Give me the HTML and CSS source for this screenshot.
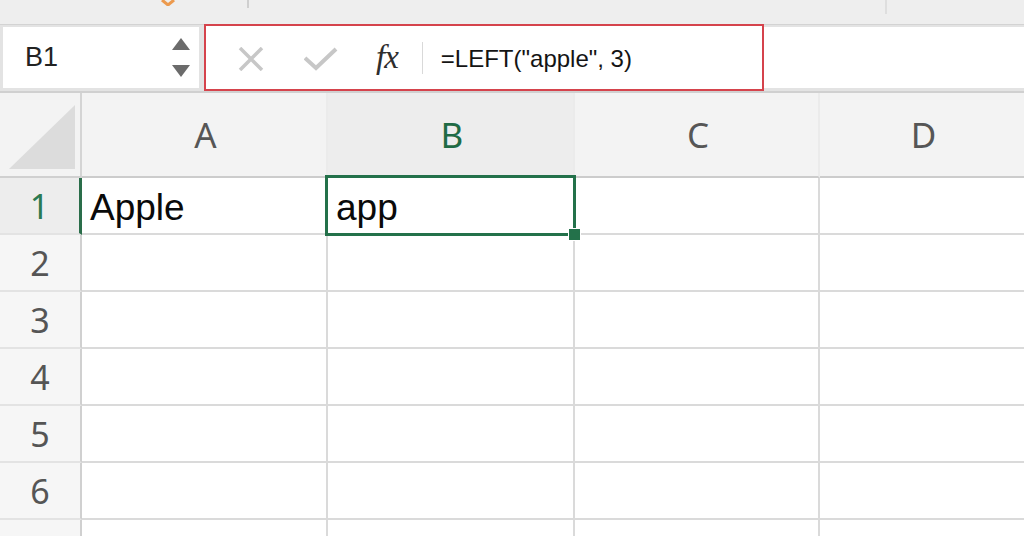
FILE: index.html
```html
<!DOCTYPE html>
<html>
<head>
<meta charset="utf-8">
<link rel="stylesheet" href="styles.css">
</head>
<body>
<div class="app">
  <div class="topstrip">
    <svg class="orange" width="14" height="6" viewBox="0 0 14 6"><path d="M1 0 L7 5 L13 0" fill="none" stroke="#ec9a4e" stroke-width="3"/></svg>
    <span class="tick tick1"></span>
    <span class="tick tick2"></span>
  </div>
  <div class="fbar">
    <div class="namebox">
      <span class="nb-text">B1</span>
      <div class="spinner">
        <svg width="18" height="13" viewBox="0 0 18 13"><path d="M9 0 L18 12 L0 12 Z" fill="#6b6b6b"/></svg>
        <svg width="18" height="13" viewBox="0 0 18 13"><path d="M0 1 L18 1 L9 13 Z" fill="#6b6b6b"/></svg>
      </div>
    </div>
    <div class="formula-box">
      <svg class="ic-x" width="26" height="24" viewBox="0 0 26 24"><path d="M2 1 L24 23 M24 1 L2 23" stroke="#c7c7c7" stroke-width="3.5" fill="none"/></svg>
      <svg class="ic-check" width="34" height="24" viewBox="0 0 34 24"><path d="M1 11 L12 21 L32 2" stroke="#c7c7c7" stroke-width="4" fill="none"/></svg>
      <span class="fx">fx</span>
      <span class="sep"></span>
      <span class="formula">=LEFT("apple", 3)</span>
    </div>
    <div class="fbar-rest"></div>
  </div>
  <div class="sheet">
    <div class="corner"><svg width="66" height="64" viewBox="0 0 66 64"><path d="M0 64 L66 64 L66 0 Z" fill="#dcdcdc"/></svg></div>
    <div class="colh">A</div>
    <div class="colh sel">B</div>
    <div class="colh">C</div>
    <div class="colh last">D</div>

    <div class="rowh sel">1</div>
    <div class="cell">Apple</div>
    <div class="cell active">app<span class="selbox"><span class="handle"></span></span></div>
    <div class="cell"></div>
    <div class="cell last"></div>

    <div class="rowh">2</div><div class="cell"></div><div class="cell"></div><div class="cell"></div><div class="cell last"></div>
    <div class="rowh">3</div><div class="cell"></div><div class="cell"></div><div class="cell"></div><div class="cell last"></div>
    <div class="rowh">4</div><div class="cell"></div><div class="cell"></div><div class="cell"></div><div class="cell last"></div>
    <div class="rowh">5</div><div class="cell"></div><div class="cell"></div><div class="cell"></div><div class="cell last"></div>
    <div class="rowh">6</div><div class="cell"></div><div class="cell"></div><div class="cell"></div><div class="cell last"></div>
    <div class="rowh">7</div><div class="cell"></div><div class="cell"></div><div class="cell"></div><div class="cell last"></div>
  </div>
</div>
</body>
</html>
```

FILE: styles.css
```css
* { box-sizing: border-box; }
html, body { margin: 0; padding: 0; background: #ffffff; }
body { width: 1024px; height: 536px; overflow: hidden; font-family: "Liberation Sans", Arial, sans-serif; }

.app { width: 1024px; height: 536px; overflow: hidden; display: flex; flex-direction: column; }

.topstrip {
  height: 25px;
  flex: none;
  background: #eeeeee;
  border-bottom: 1px solid #d3d3d3;
  display: flex;
  align-items: flex-start;
}
.orange { margin-left: 161px; display: block; }
.tick { display: block; width: 2px; background: #cfcfcf; }
.tick1 { height: 8px; margin-left: 72px; }
.tick2 { height: 14px; margin-left: 636px; background: #dedede; }

.fbar {
  height: 68px;
  flex: none;
  display: flex;
  background: #e3e3e3;
  padding: 2px 0 3px 0;
  border-bottom: 2px solid #d0d0d0;
}
.namebox {
  width: 196px;
  margin-left: 3px;
  background: #ffffff;
  display: flex;
  align-items: center;
  padding-left: 22px;
  padding-right: 9px;
}
.nb-text { font-size: 27px; color: #222; flex: 1; }
.spinner { display: flex; flex-direction: column; gap: 13px; }
.spinner svg { display: block; }

.formula-box {
  width: 560px;
  margin: -3px 0 -3px 5px;
  border: 2px solid #d5434c;
  background: #ffffff;
  display: flex;
  align-items: center;
  padding-left: 32px;
}
.ic-x { display: block; margin-top: 2px; }
.ic-check { display: block; margin-left: 40px; margin-top: 2px; }
.fx {
  font-family: "Liberation Serif", "Times New Roman", serif;
  font-style: italic;
  font-size: 33px;
  color: #2e2e2e;
  margin-left: 38px;
  letter-spacing: -1px;
}
.sep { width: 1px; height: 32px; background: #d9d9d9; margin-left: 24px; }
.formula { font-size: 24px; color: #141414; margin-left: 18px; margin-top: 2px; }
.fbar-rest { flex: 1; background: #ffffff; }

.sheet {
  flex: none;
  display: grid;
  grid-template-columns: 82px 246px 247px 245px 1fr;
  grid-template-rows: 85px repeat(7, 57px);
}
.corner {
  background: #f3f3f3;
  border-right: 2px solid #d4d4d4;
  border-bottom: 2px solid #d0d0d0;
  display: flex;
  align-items: flex-end;
  justify-content: flex-end;
  padding: 0 5px 7px 0;
}
.corner svg { display: block; }
.colh {
  background: #f3f3f3;
  border-right: 2px solid #ebebeb;
  border-bottom: 2px solid #cccccc;
  display: flex;
  align-items: center;
  justify-content: center;
  font-family: "Noto Sans", "Open Sans", sans-serif;
  font-size: 35px;
  color: #565656;
  padding-left: 3px;
}
.colh.sel { background: #ededed; color: #1f6b45; }
.colh.last { border-right: none; }
.rowh {
  background: #f6f6f6;
  border-right: 2px solid #d0d0d0;
  border-bottom: 2px solid #e3e3e3;
  display: flex;
  align-items: center;
  justify-content: center;
  font-family: "Noto Sans", "Open Sans", sans-serif;
  font-size: 34px;
  color: #555555;
}
.rowh.sel { background: #ededed; color: #2b7a52; border-right: 3px solid #2a6d4a; }
.cell {
  border-right: 2px solid #dadada;
  border-bottom: 2px solid #dadada;
  display: flex;
  align-items: center;
  padding-left: 8px;
  padding-top: 4px;
  font-size: 37px;
  color: #0a0a0a;
}
.cell.last { border-right: none; }
.cell.active { position: relative; }
.selbox {
  position: absolute;
  left: -3px;
  top: -3px;
  right: -3px;
  bottom: -3px;
  border: 3px solid #23714a;
}
.handle {
  position: absolute;
  right: -8px;
  bottom: -8px;
  width: 13px;
  height: 13px;
  background: #23714a;
  border: 1px solid #ffffff;
}
```
